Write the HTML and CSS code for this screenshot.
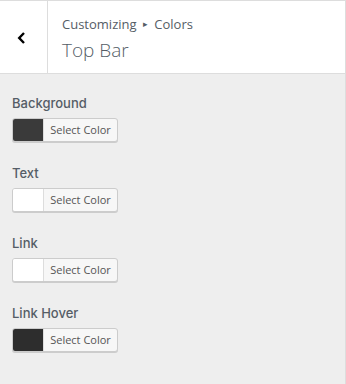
FILE: index.html
```html
<!DOCTYPE html>
<html>
<head>
<meta charset="utf-8">
<link rel="stylesheet" href="styles.css">
</head>
<body>
<div class="panel">
  <div class="header">
    <button class="back" aria-label="Back">
      <svg width="10" height="12" viewBox="0 0 10 12"><path d="M7 1 L2.2 6 L7 11" fill="none" stroke="#000" stroke-width="2.4"/></svg>
    </button>
    <div class="title">
      <div class="crumb">Customizing <span class="tri">▸</span> Colors</div>
      <div class="name">Top Bar</div>
    </div>
  </div>
  <div class="controls">
    <div class="control">
      <div class="label">Background</div>
      <div class="picker"><span class="swatch dark1"></span><span class="btxt">Select Color</span></div>
    </div>
    <div class="control">
      <div class="label">Text</div>
      <div class="picker"><span class="swatch white"></span><span class="btxt">Select Color</span></div>
    </div>
    <div class="control">
      <div class="label">Link</div>
      <div class="picker"><span class="swatch white"></span><span class="btxt">Select Color</span></div>
    </div>
    <div class="control">
      <div class="label">Link Hover</div>
      <div class="picker"><span class="swatch dark2"></span><span class="btxt">Select Color</span></div>
    </div>
  </div>
</div>
</body>
</html>
```
FILE: styles.css
```css
html, body {
  margin: 0;
  padding: 0;
  background: #eeeeee;
  font-family: "Open Sans", "Noto Sans", sans-serif;
}
.panel {
  width: 346px;
  height: 384px;
  box-sizing: border-box;
  border-right: 1px solid #dddddd;
  background: #eeeeee;
}
.header {
  display: flex;
  height: 74px;
  box-sizing: border-box;
  background: #fff;
  border-top: 1px solid #dddddd;
  border-bottom: 1px solid #dddddd;
}
.back {
  width: 48px;
  border: 0;
  border-right: 1px solid #dddddd;
  background: #fff;
  padding: 0;
  display: flex;
  align-items: center;
  justify-content: center;
}
.back svg { display: block; margin-right: 3px; margin-top: 1px; }
.title {
  padding: 13px 0 0 14px;
}
.crumb {
  font-size: 13px;
  line-height: 20px;
  color: #555d66;
}
.tri {
  font-size: 9px;
  position: relative;
  top: -2px;
  margin: 0 3px;
}
.name {
  font-size: 19px;
  line-height: 28px;
  color: #555d66;
  font-weight: 300;
}
.controls {
  padding: 20px 12px 0 12px;
  display: flex;
  flex-direction: column;
  gap: 22px;
}
.label {
  font-family: "Inter", "Open Sans", sans-serif;
  font-size: 13px;
  font-weight: 500;
  color: #555d66;
  line-height: 19px;
  margin-bottom: 5px;
}
.picker {
  display: flex;
  width: 106px;
  height: 24px;
  box-sizing: border-box;
  border: 1px solid #cccccc;
  border-radius: 3px;
  background: #f7f7f7;
  box-shadow: 0 1px 0 #cccccc;
  overflow: hidden;
}
.swatch {
  width: 30px;
  height: 100%;
  border-right: 1px solid #dddddd;
}
.dark1 { background: #3a3a3a; }
.dark2 { background: #2d2d2d; }
.white { background: #ffffff; }
.btxt {
  flex: 1;
  font-size: 11px;
  color: #555;
  line-height: 22px;
  text-align: center;
}
```
